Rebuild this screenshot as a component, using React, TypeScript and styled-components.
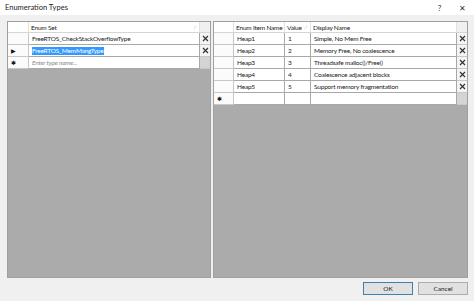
import React from 'react'
import styled, { createGlobalStyle } from 'styled-components'

const GlobalStyle = createGlobalStyle`
  html, body {
    margin: 0;
    padding: 0;
    background: #f0f0f0;
  }
  body {
    font-family: Lato, "Open Sans", sans-serif;
  }
`

const Window = styled.div`
  width: 474px;
  height: 301px;
  display: flex;
  flex-direction: column;
  background: #f0f0f0;
  overflow: hidden;
`

const TitleBar = styled.div`
  height: 16px;
  background: #ffffff;
  display: flex;
  align-items: center;
  padding-left: 5px;
  font-size: 7.5px;
  color: #222;
`

const Title = styled.div`
  flex: 1;
`

const TitleButton = styled.div`
  width: 23px;
  text-align: center;
  font-size: 8px;
  color: #333;
`

const Body = styled.div`
  flex: 1;
  display: flex;
  gap: 2px;
  padding: 6px 6px 0 7px;
`

const Panel = styled.div<{ $w: number }>`
  width: ${p => p.$w}px;
  height: 257px;
  box-sizing: border-box;
  border: 1px solid #a0a0a0;
  background: #ababab;
`

const Row = styled.div<{ $cols: string; $h?: number }>`
  display: grid;
  grid-template-columns: ${p => p.$cols};
  height: ${p => p.$h ?? 12}px;
`

const HeadCell = styled.div`
  background: #ffffff;
  border-right: 1px solid #e2e2e2;
  border-bottom: 1px solid #d5d5d5;
  font-size: 6.5px;
  letter-spacing: -0.2px;
  color: #222;
  display: flex;
  align-items: center;
  padding-left: 2px;
  position: relative;
  white-space: nowrap;
  overflow: hidden;
`

const SortMark = styled.span`
  position: absolute;
  right: 3px;
  top: 1px;
  color: #bbb;
  font-size: 6px;
`

const RowHead = styled.div`
  background: #fbfbfb;
  border-right: 1px solid #c8c8c8;
  border-bottom: 1px solid #c8c8c8;
  display: flex;
  align-items: center;
  padding-left: 3px;
  font-size: 6px;
  color: #111;
`

const Cell = styled.div`
  background: #ffffff;
  border-right: 1px solid #a8a8a8;
  border-bottom: 1px solid #a8a8a8;
  font-size: 6.5px;
  letter-spacing: -0.2px;
  color: #222;
  display: flex;
  align-items: center;
  padding-left: 3px;
  white-space: nowrap;
  overflow: hidden;
`

const Selected = styled.span`
  background: #3399ff;
  color: #ffffff;
  line-height: 8px;
`

const Placeholder = styled.span`
  font-style: italic;
  color: #8a8a8a;
`

const DelCell = styled.div<{ $empty?: boolean }>`
  background: ${p => (p.$empty ? '#d4d4d4' : '#f4f4f4')};
  border-bottom: 1px solid #c8c8c8;
  display: flex;
  align-items: center;
  justify-content: center;
`

const HeadFill = styled.div`
  background: #f0f0f0;
  border-bottom: 1px solid #d5d5d5;
`

const Footer = styled.div`
  display: flex;
  justify-content: flex-end;
  gap: 5px;
  padding: 4px 6px 6px 0;
`

const Button = styled.div<{ $primary?: boolean }>`
  width: 50px;
  height: 13px;
  box-sizing: border-box;
  border: 1px solid ${p => (p.$primary ? '#3c7fb1' : '#adadad')};
  background: #e1e1e1;
  font-size: 6.5px;
  color: #222;
  display: flex;
  align-items: center;
  justify-content: center;
`

const DeleteIcon = () => (
  <svg width="7" height="7" viewBox="0 0 7 7">
    <path d="M1 1 L6 6 M6 1 L1 6" stroke="#333" strokeWidth="1.2" />
  </svg>
)

const leftCols = '21px 171px 10px'
const rightCols = '20px 51px 26px 146px 10px'

const items = [
  ['Heap1', '1', 'Simple, No Mem Free'],
  ['Heap2', '2', 'Memory Free, No coalescence'],
  ['Heap3', '3', 'Threadsafe malloc()/Free()'],
  ['Heap4', '4', 'Coalescence adjacent blocks'],
  ['Heap5', '5', 'Support memory fragmentation'],
]

export default function App() {
  return (
    <Window>
      <GlobalStyle />
      <TitleBar>
        <Title>Enumeration Types</Title>
        <TitleButton>?</TitleButton>
        <TitleButton>✕</TitleButton>
      </TitleBar>
      <Body>
        <Panel $w={204}>
          <Row $cols={leftCols} $h={11}>
            <HeadCell />
            <HeadCell>
              Enum Set<SortMark>/</SortMark>
            </HeadCell>
            <HeadFill />
          </Row>
          <Row $cols={leftCols}>
            <RowHead />
            <Cell>FreeRTOS_CheckStackOverflowType</Cell>
            <DelCell>
              <DeleteIcon />
            </DelCell>
          </Row>
          <Row $cols={leftCols}>
            <RowHead>▶</RowHead>
            <Cell>
              <Selected>FreeRTOS_MemMangType</Selected>
            </Cell>
            <DelCell>
              <DeleteIcon />
            </DelCell>
          </Row>
          <Row $cols={leftCols}>
            <RowHead>✱</RowHead>
            <Cell>
              <Placeholder>Enter type name...</Placeholder>
            </Cell>
            <DelCell $empty />
          </Row>
        </Panel>
        <Panel $w={255}>
          <Row $cols={rightCols} $h={11}>
            <HeadCell />
            <HeadCell>Enum Item Name</HeadCell>
            <HeadCell>
              Value<SortMark>/</SortMark>
            </HeadCell>
            <HeadCell>Display Name</HeadCell>
            <HeadFill />
          </Row>
          {items.map(([name, value, display]) => (
            <Row $cols={rightCols} key={name}>
              <RowHead />
              <Cell>{name}</Cell>
              <Cell>{value}</Cell>
              <Cell>{display}</Cell>
              <DelCell>
                <DeleteIcon />
              </DelCell>
            </Row>
          ))}
          <Row $cols={rightCols}>
            <RowHead>✱</RowHead>
            <Cell />
            <Cell />
            <Cell />
            <DelCell $empty />
          </Row>
        </Panel>
      </Body>
      <Footer>
        <Button $primary>OK</Button>
        <Button>Cancel</Button>
      </Footer>
    </Window>
  )
}
